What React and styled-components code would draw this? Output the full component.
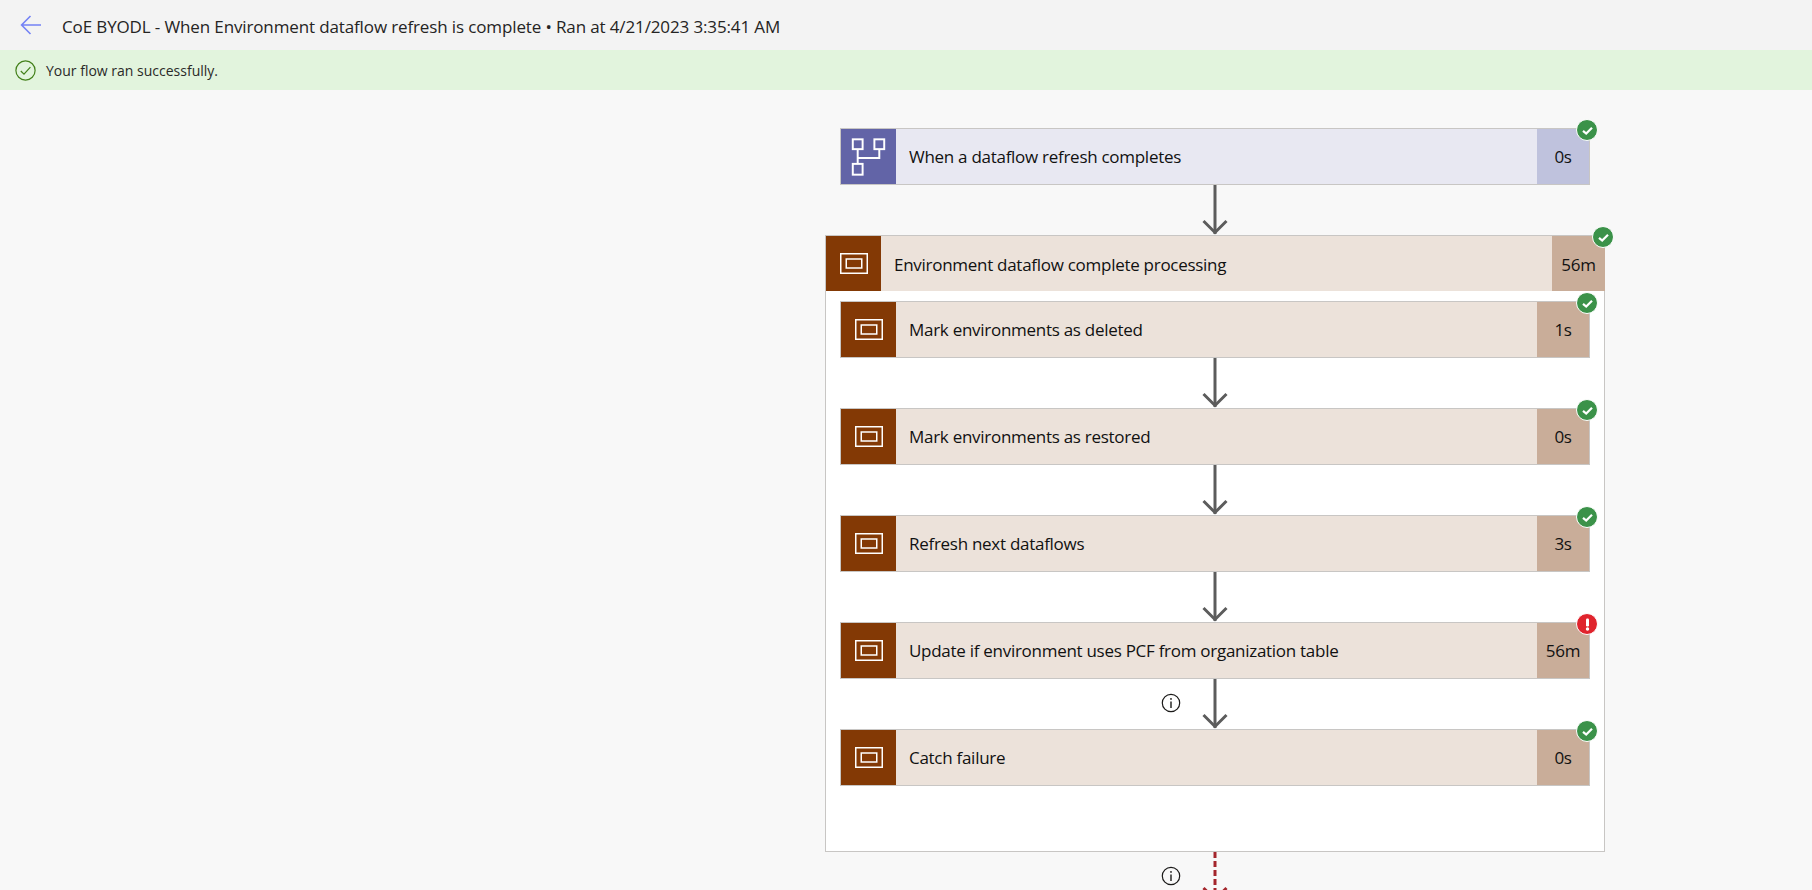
import React from 'react'
import styled, { createGlobalStyle } from 'styled-components'

const GlobalStyle = createGlobalStyle`
  html, body {
    margin: 0;
    height: 890px;
    overflow: hidden;
    background: #f8f8f8;
    font-family: "Open Sans", "Noto Sans", "Liberation Sans", sans-serif;
    color: #201f1e;
  }
`

const steps = [
  { title: 'Mark environments as deleted', time: '1s' },
  { title: 'Mark environments as restored', time: '0s' },
  { title: 'Refresh next dataflows', time: '3s' },
  { title: 'Update if environment uses PCF from organization table', time: '56m', failed: true, info: true },
  { title: 'Catch failure', time: '0s' },
]

const palettes = {
  trigger: { icon: '#6264a7', body: '#e8e8f2', time: '#bfc2dd' },
  scope: { icon: '#833905', body: '#ece2da', time: '#c9ad99' },
}

function TriggerIcon() {
  return (
    <svg width="56" height="56" viewBox="0 0 56 56" fill="none" stroke="#fff" strokeWidth="2">
      <rect x="12" y="10" width="10" height="10" />
      <rect x="34" y="10" width="10" height="10" />
      <rect x="12" y="35" width="10" height="11" />
      <path d="M17 20V35M17 29H39V20" />
    </svg>
  )
}

function ScopeIcon() {
  return (
    <svg width="28" height="21" viewBox="0 0 28 21" fill="none" stroke="#fff" strokeWidth="1.5">
      <rect x="0.75" y="0.75" width="26.5" height="19.5" />
      <rect x="6.25" y="6" width="15.5" height="9" />
    </svg>
  )
}

function StatusBadge({ failed }) {
  return (
    <Badge $failed={failed}>
      {failed ? (
        <svg width="17" height="17" viewBox="0 0 17 17" fill="#fff">
          <rect x="7" y="2.5" width="3" height="8" rx="1.2" />
          <circle cx="8.5" cy="13" r="1.7" />
        </svg>
      ) : (
        <svg width="17" height="17" viewBox="0 0 17 17" fill="none" stroke="#fff" strokeWidth="2.2">
          <path d="M4 8.8L7.2 11.6L13 5.8" />
        </svg>
      )}
    </Badge>
  )
}

function InfoIcon() {
  return (
    <svg width="20" height="20" viewBox="0 0 20 20" fill="none" stroke="#1b1a19" strokeWidth="1.2">
      <circle cx="10" cy="10" r="8.7" />
      <path d="M10 8.6V15" strokeWidth="1.4" />
      <circle cx="10" cy="5.9" r="0.9" fill="#1b1a19" stroke="none" />
    </svg>
  )
}

function ArrowLine({ height = 50, dashed }) {
  const color = dashed ? '#a4262c' : '#5c5c5c'
  const dash = dashed ? '6 3' : undefined
  return (
    <svg width="30" height={height} viewBox={`0 0 30 ${height}`} fill="none" stroke={color} strokeWidth="3">
      <path d={`M15 0V${height - 1}`} strokeDasharray={dash} />
      <path d={`M3.5 ${height - 14}L15 ${height - 2.5}L26.5 ${height - 14}`} strokeDasharray={dash} />
    </svg>
  )
}

function Card({ kind, title, time, failed, wide }) {
  return (
    <CardRow $wide={wide} $body={palettes[kind].body}>
      <IconBox $color={palettes[kind].icon}>
        {kind === 'trigger' ? <TriggerIcon /> : <ScopeIcon />}
      </IconBox>
      <CardTitle $wide={wide}>{title}</CardTitle>
      <Duration $wide={wide} $color={palettes[kind].time}>{time}</Duration>
      <StatusBadge failed={failed} />
    </CardRow>
  )
}

export default function App() {
  return (
    <Page>
      <GlobalStyle />
      <Header>
        <BackButton>
          <svg width="22" height="22" viewBox="0 0 22 22" fill="none" stroke="#7482f5" strokeWidth="1.6">
            <path d="M21 11H2M10.5 2L1.6 11L10.5 20" />
          </svg>
        </BackButton>
        <Title>CoE BYODL - When Environment dataflow refresh is complete • Ran at 4/21/2023 3:35:41 AM</Title>
      </Header>
      <Banner>
        <svg width="21" height="21" viewBox="0 0 21 21" fill="none" stroke="#43801a" strokeWidth="1.2">
          <circle cx="10.5" cy="10.5" r="9.6" />
          <path d="M5.8 11L9 14.2L15.4 7.2" />
        </svg>
        <BannerText>Your flow ran successfully.</BannerText>
      </Banner>
      <Canvas>
        <Flow>
          <Card kind="trigger" title="When a dataflow refresh completes" time="0s" />
          <Connector><ArrowLine /></Connector>
          <Scope>
            <Card kind="scope" wide title="Environment dataflow complete processing" time="56m" />
            <ScopeBody>
              {steps.map((step, i) => (
                <React.Fragment key={step.title}>
                  <Card kind="scope" title={step.title} time={step.time} failed={step.failed} />
                  {i < steps.length - 1 && (
                    <Connector>
                      <ArrowLine />
                      {step.info && <InfoMark><InfoIcon /></InfoMark>}
                    </Connector>
                  )}
                </React.Fragment>
              ))}
            </ScopeBody>
          </Scope>
          <Connector>
            <ArrowLine dashed />
            <InfoMark><InfoIcon /></InfoMark>
          </Connector>
        </Flow>
      </Canvas>
    </Page>
  )
}

// STYLE
const Page = styled.div`
  display: flex;
  flex-direction: column;
  height: 890px;
  overflow: hidden;
`
const Header = styled.header`
  height: 50px;
  flex: none;
  display: flex;
  align-items: center;
  background: #f3f3f3;
  padding-left: 20px;
`
const BackButton = styled.div`
  display: flex;
  width: 42px;
`
const Title = styled.h1`
  margin: 3px 0 0;
  font-size: 17px;
  font-weight: 400;
  letter-spacing: -0.13px;
  white-space: nowrap;
  color: #252423;
`
const Banner = styled.div`
  height: 40px;
  flex: none;
  display: flex;
  align-items: center;
  gap: 10px;
  padding-left: 15px;
  background: #e2f4dd;
`
const BannerText = styled.span`
  font-size: 14px;
  color: #2a2a28;
`
const Canvas = styled.main`
  flex: none;
  padding: 38px 0 0 825px;
  background: #f8f8f8;
`
const Flow = styled.div`
  width: 780px;
  display: flex;
  flex-direction: column;
  align-items: center;
`
const CardRow = styled.div`
  position: relative;
  box-sizing: border-box;
  width: ${p => (p.$wide ? '780px' : '750px')};
  height: ${p => (p.$wide ? '56px' : '57px')};
  flex: none;
  display: flex;
  align-items: stretch;
  background: ${p => p.$body};
  border: 1px solid #c8c6c4;
  ${p => p.$wide && 'border-bottom: 0; border-right: 0; margin-left: -1px;'}
`
const IconBox = styled.div`
  width: 55px;
  flex: none;
  display: flex;
  align-items: center;
  justify-content: center;
  background: ${p => p.$color};
`
const CardTitle = styled.div`
  flex: 1;
  display: flex;
  align-items: center;
  padding-left: 13px;
  padding-top: ${p => (p.$wide ? '1px' : '0')};
  font-size: 17px;
  letter-spacing: -0.28px;
  color: #111;
`
const Duration = styled.div`
  width: ${p => (p.$wide ? '53px' : '52px')};
  flex: none;
  display: flex;
  align-items: center;
  justify-content: center;
  padding-top: ${p => (p.$wide ? '1px' : '0')};
  font-size: 17px;
  letter-spacing: -0.3px;
  color: #111;
  background: ${p => p.$color};
`
const Badge = styled.div`
  position: absolute;
  top: -10px;
  right: -9px;
  width: 22px;
  height: 22px;
  box-sizing: border-box;
  display: flex;
  align-items: center;
  justify-content: center;
  border-radius: 50%;
  border: 1px solid #fff;
  background: ${p => (p.$failed ? '#e0242d' : '#3b9249')};
`
const Connector = styled.div`
  position: relative;
  height: 50px;
  flex: none;
  display: flex;
  justify-content: center;
`
const InfoMark = styled.div`
  position: absolute;
  top: 14px;
  left: -39px;
  display: flex;
`
const Scope = styled.section`
  box-sizing: border-box;
  width: 780px;
  flex: none;
  display: flex;
  flex-direction: column;
  border: 1px solid #c8c6c4;
  border-top: 0;
  background: #fff;
`
const ScopeBody = styled.div`
  display: flex;
  flex-direction: column;
  align-items: center;
  padding: 10px 0 65px;
`
